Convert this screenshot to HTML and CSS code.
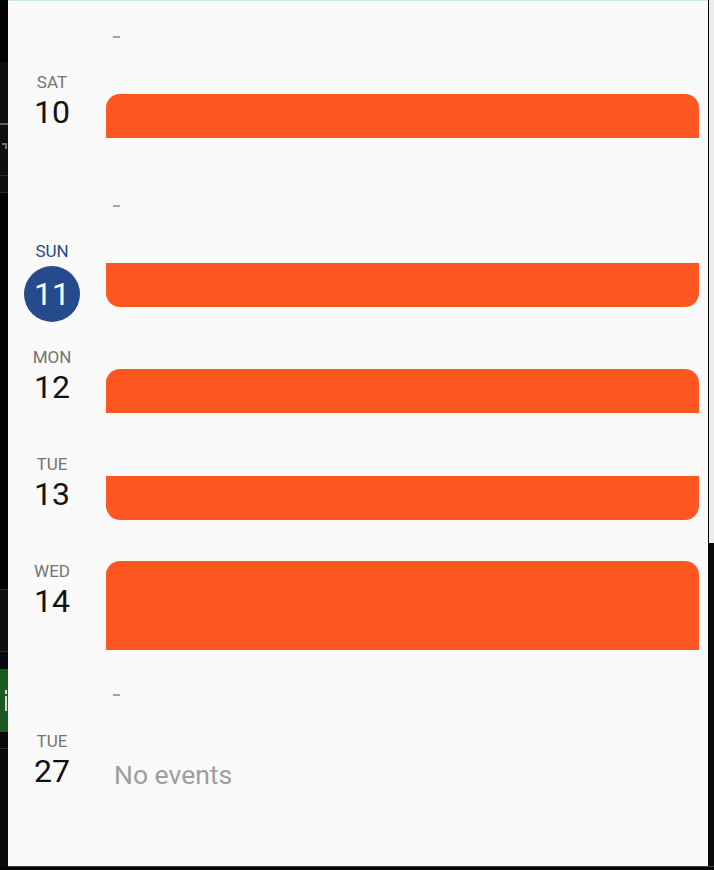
FILE: index.html
```html
<!DOCTYPE html>
<html lang="en">
<head>
<meta charset="utf-8">
<title>Schedule</title>
<link rel="stylesheet" href="styles.css">
</head>
<body>
<div class="screen">
  <div class="left-strip">
    <div class="ls ls-a"></div>
    <div class="ls ls-b"><div class="ls-line"></div><div class="ls-glyph"></div></div>
    <div class="ls ls-sep"></div>
    <div class="ls ls-c"></div>
    <div class="ls ls-sep"></div>
    <div class="ls ls-d"></div>
    <div class="ls ls-sep"></div>
    <div class="ls ls-e"></div>
    <div class="ls ls-sep"></div>
    <div class="ls ls-f"></div>
    <div class="ls ls-green"><div class="ls-i-dot"></div><div class="ls-i-bar"></div></div>
    <div class="ls ls-f2"></div>
    <div class="ls ls-sep"></div>
    <div class="ls ls-g"></div>
  </div>

  <main class="panel">
    <div class="gap gap-first"><span class="dash"></span></div>

    <section class="day">
      <div class="date"><div class="dow">SAT</div><div class="dom">10</div></div>
      <div class="events"><div class="event round-top"></div></div>
    </section>

    <div class="gap gap-mid"><span class="dash"></span></div>

    <section class="day day-short">
      <div class="date"><div class="dow dow-today">SUN</div><div class="dom dom-today">11</div></div>
      <div class="events"><div class="event round-bottom"></div></div>
    </section>

    <section class="day">
      <div class="date"><div class="dow">MON</div><div class="dom">12</div></div>
      <div class="events"><div class="event round-top"></div></div>
    </section>

    <section class="day">
      <div class="date"><div class="dow">TUE</div><div class="dom">13</div></div>
      <div class="events"><div class="event round-bottom"></div></div>
    </section>

    <section class="day">
      <div class="date"><div class="dow">WED</div><div class="dom">14</div></div>
      <div class="events events-flush"><div class="event event-tall round-top"></div></div>
    </section>

    <div class="gap gap-last"><span class="dash"></span></div>

    <section class="day day-last">
      <div class="date"><div class="dow">TUE</div><div class="dom">27</div></div>
      <div class="events events-empty"><div class="no-events">No events</div></div>
    </section>
  </main>

  <div class="right-strip"><div class="rs-light"></div></div>
</div>
<div class="bottom-edge"></div>
</body>
</html>
```

FILE: styles.css
```css
html, body {
  margin: 0;
  padding: 0;
}
body {
  width: 714px;
  height: 870px;
  overflow: hidden;
  background: #050505;
  font-family: Roboto, "Noto Sans", "Liberation Sans", sans-serif;
}
.screen {
  display: flex;
  height: 866px;
}

/* left dark strip */
.left-strip {
  width: 8px;
  flex: none;
  display: flex;
  flex-direction: column;
  background: #030303;
}
.ls { flex: none; }
.ls-a { height: 62px; background: #020202; }
.ls-b {
  height: 113px;
  background: #0f0f11;
  display: flex;
  flex-direction: column;
}
.ls-line { margin-top: 61px; height: 2px; background: #5c6168; }
.ls-glyph {
  margin-top: 18px;
  margin-left: 2px;
  width: 5px;
  height: 6px;
  border-top: 2px solid #6b7078;
  border-right: 2px solid #6b7078;
  box-sizing: border-box;
}
.ls-sep { height: 1px; background: #2b2b2e; }
.ls-c { height: 16px; background: #0f0f11; }
.ls-d { height: 396px; background: #020202; }
.ls-e { height: 61px; background: #0e0e11; }
.ls-f { height: 17px; background: #0a0a0c; }
.ls-green {
  height: 63px;
  background: #1b5a20;
  display: flex;
  flex-direction: column;
  align-items: flex-end;
}
.ls-i-dot { margin-top: 21px; width: 2px; height: 4px; background: #d8d8d8; margin-right: 1px; }
.ls-i-bar { margin-top: 2px; width: 2px; height: 15px; background: #d8d8d8; margin-right: 1px; }
.ls-f2 { height: 16px; background: #0a0a0c; }
.ls-g { flex: 1; background: #0a0a0c; }

/* right strip */
.right-strip {
  width: 6px;
  flex: none;
  border-left: 1px solid #000;
  box-sizing: border-box;
  background: #0a0a0a;
}
.rs-light { height: 543px; background: #ececec; }

.bottom-edge {
  height: 4px;
  margin-left: 8px;
  border-top: 1px solid #3d3d3d;
  background: #050505;
}

/* panel */
.panel {
  width: 700px;
  flex: none;
  background: #fafafa;
  border-top: 1px solid #bfeaf0;
  box-sizing: border-box;
  display: flex;
  flex-direction: column;
}

.gap {
  padding-left: 105px;
  box-sizing: border-box;
}
.gap-first { height: 71px; padding-top: 35px; }
.gap-mid { height: 62px; padding-top: 26px; }
.gap-last { height: 63px; padding-top: 26px; }
.dash {
  display: block;
  width: 7px;
  height: 2px;
  background: #a6a6a6;
}

.day {
  height: 107px;
  display: grid;
  grid-template-columns: 88px 1fr;
  column-gap: 10px;
  padding-right: 9px;
  box-sizing: border-box;
}
.day-short { height: 106px; }
.day-last { height: auto; flex: 1; }

.date {
  display: flex;
  flex-direction: column;
  align-items: center;
}
.dow {
  font-size: 17px;
  line-height: 20px;
  color: #737373;
}
.dow-today { color: #264b8d; }
.dom {
  margin-top: 2px;
  font-size: 32px;
  line-height: 36px;
  color: #111;
}
.dom-today {
  margin-top: 5px;
  width: 56px;
  height: 56px;
  border-radius: 50%;
  background: #264b8d;
  color: #fff;
  line-height: 56px;
  text-align: center;
}

.events { padding-top: 22px; }
.events-flush { padding-top: 0; }
.events-empty { padding-top: 30px; padding-left: 8px; }

.event {
  height: 44px;
  background: #ff5722;
}
.event-tall { height: 89px; }
.round-top { border-radius: 14px 14px 0 0; }
.round-bottom { border-radius: 0 0 14px 14px; }

.no-events {
  font-size: 26.5px;
  line-height: 28px;
  color: #9e9e9e;
}
```
